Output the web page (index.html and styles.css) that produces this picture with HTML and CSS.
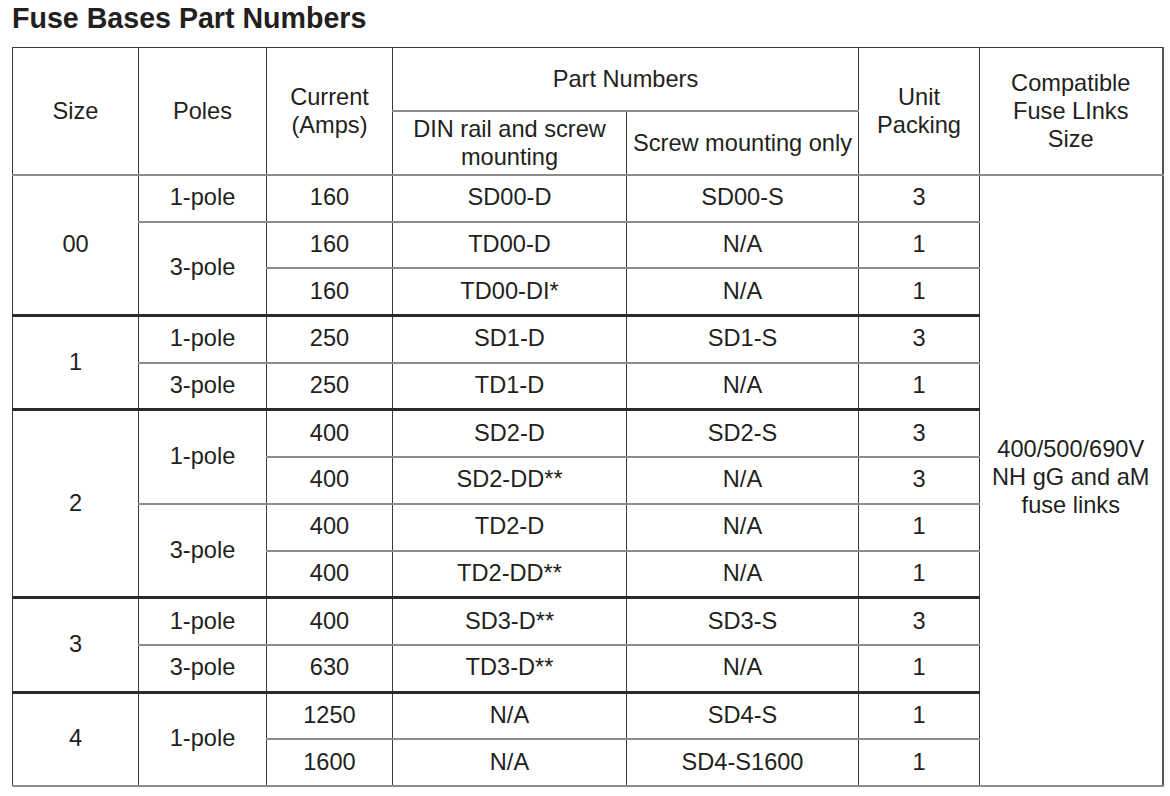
FILE: index.html
```html
<!DOCTYPE html>
<html>
<head>
<meta charset="utf-8">
<link rel="stylesheet" href="styles.css">
</head>
<body>
<h1 class="title">Fuse Bases Part Numbers</h1>
<table class="parts">
  <colgroup>
    <col class="c-size"><col class="c-poles"><col class="c-cur"><col class="c-din"><col class="c-screw"><col class="c-unit"><col class="c-compat">
  </colgroup>
  <thead>
    <tr class="h1">
      <th rowspan="2">Size</th>
      <th rowspan="2">Poles</th>
      <th rowspan="2">Current<br>(Amps)</th>
      <th colspan="2">Part Numbers</th>
      <th rowspan="2">Unit<br>Packing</th>
      <th rowspan="2">Compatible<br>Fuse LInks<br>Size</th>
    </tr>
    <tr class="h2">
      <th>DIN rail and screw<br>mounting</th>
      <th>Screw mounting only</th>
    </tr>
  </thead>
  <tbody>
    <tr>
      <td rowspan="3">00</td><td>1-pole</td><td>160</td><td>SD00-D</td><td>SD00-S</td><td>3</td>
      <td rowspan="13" class="compat">400/500/690V<br>NH gG and aM<br>fuse links</td>
    </tr>
    <tr><td rowspan="2">3-pole</td><td>160</td><td>TD00-D</td><td>N/A</td><td>1</td></tr>
    <tr><td>160</td><td>TD00-DI*</td><td>N/A</td><td>1</td></tr>
    <tr class="grp"><td rowspan="2">1</td><td>1-pole</td><td>250</td><td>SD1-D</td><td>SD1-S</td><td>3</td></tr>
    <tr><td>3-pole</td><td>250</td><td>TD1-D</td><td>N/A</td><td>1</td></tr>
    <tr class="grp"><td rowspan="4">2</td><td rowspan="2">1-pole</td><td>400</td><td>SD2-D</td><td>SD2-S</td><td>3</td></tr>
    <tr><td>400</td><td>SD2-DD**</td><td>N/A</td><td>3</td></tr>
    <tr><td rowspan="2">3-pole</td><td>400</td><td>TD2-D</td><td>N/A</td><td>1</td></tr>
    <tr><td>400</td><td>TD2-DD**</td><td>N/A</td><td>1</td></tr>
    <tr class="grp"><td rowspan="2">3</td><td>1-pole</td><td>400</td><td>SD3-D**</td><td>SD3-S</td><td>3</td></tr>
    <tr><td>3-pole</td><td>630</td><td>TD3-D**</td><td>N/A</td><td>1</td></tr>
    <tr class="grp"><td rowspan="2">4</td><td rowspan="2">1-pole</td><td>1250</td><td>N/A</td><td>SD4-S</td><td>1</td></tr>
    <tr><td>1600</td><td>N/A</td><td>SD4-S1600</td><td>1</td></tr>
  </tbody>
</table>
</body>
</html>
```
FILE: styles.css
```css
html, body {
  margin: 0;
  padding: 0;
  background: #ffffff;
}
body {
  padding-left: 12px;
  font-family: "Liberation Sans", Arial, sans-serif;
  color: #231f20;
}
.title {
  margin: 0;
  padding-top: 2px;
  height: 47px;
  box-sizing: border-box;
  font-size: 28.6px;
  line-height: 32px;
  font-weight: bold;
  color: #231f20;
}
.parts {
  border-collapse: collapse;
  table-layout: fixed;
  width: 1150px;
  font-size: 23.6px;
  line-height: 28px;
  border: 2px solid #555;
  border-left: 1px solid #333;
  border-top: 1px solid #333;
}
.c-size { width: 126px; }
.c-poles { width: 128px; }
.c-cur { width: 126px; }
.c-din { width: 234px; }
.c-screw { width: 232px; }
.c-unit { width: 121px; }
.c-compat { width: 183px; }

.parts th,
.parts td {
  padding: 0;
  text-align: center;
  vertical-align: middle;
  font-weight: normal;
  border-left: 1px solid #3a3a3a;
  border-right: 1px solid #3a3a3a;
  border-top: 2px solid #8c8c8c;
  border-bottom: 2px solid #8c8c8c;
}
.parts thead th {
  border-top: 1px solid #3a3a3a;
}
.parts .h1 th { height: 62px; }
.parts .h2 th { height: 62px; border-top: 1px solid #555; }
.parts thead th[rowspan] { border-bottom: 2px solid #8c8c8c; }
.parts tbody td { height: 42.7px; padding-bottom: 2px; }
.parts tr.grp td { border-top: 3px solid #2a2a2a; }
.parts td.compat { padding-bottom: 6px; }
```
